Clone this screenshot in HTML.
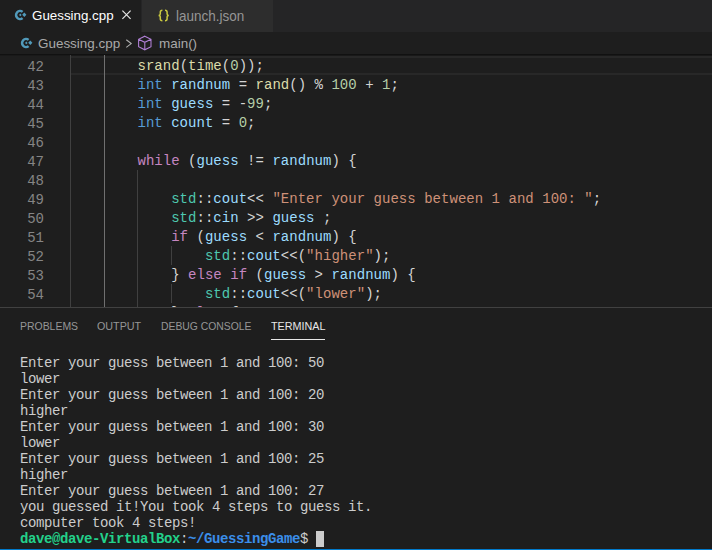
<!DOCTYPE html>
<html><head><meta charset="utf-8">
<style>
*{margin:0;padding:0;box-sizing:border-box}
html,body{width:712px;height:550px;overflow:hidden;background:#1e1e1e}
body{position:relative;font-family:"Liberation Sans",sans-serif}
.abs{position:absolute}
#tabs{left:0;top:0;width:712px;height:32px;background:#252526}
#tab1{left:0;top:0;width:142px;height:32px;background:#1e1e1e;border-right:1px solid #252526}
#tab2{left:142px;top:0;width:132px;height:32px;background:#2d2d2d;border-right:1px solid #252526}
.tt{font-size:13px;white-space:nowrap;line-height:16px}
#crumbs{left:0;top:32px;width:712px;height:22px;background:#1e1e1e}
.bc{font-size:13.45px;color:#a9a9a9;white-space:nowrap;line-height:16px}
#shadow{left:0;top:54px;width:712px;height:2px;background:linear-gradient(#111111 50%,#191919 50%)}
#hl{left:71px;top:56px;width:641px;height:19px;border-top:2px solid #282828;border-bottom:2px solid #282828}
.ln{margin-top:2px;left:0;width:44px;text-align:right;font-family:"Liberation Mono",monospace;font-size:14px;letter-spacing:0.03px;color:#858585;height:19px;line-height:19px}
.code{margin-top:1px;left:70px;font-family:"Liberation Mono",monospace;font-size:14px;letter-spacing:0.03px;color:#d4d4d4;white-space:pre;height:19px;line-height:19px}
.g{width:1px;background:#404040}
.kw{color:#569cd6}.fn{color:#dcdcaa}.v{color:#9cdcfe}.n{color:#b5cea8}.c{color:#c586c0}.ns{color:#4ec9b0}.s{color:#ce9178}
#panelb{left:0;top:307px;width:712px;height:1px;background:#414141}
.pt{transform-origin:0 0;font-size:11px;color:#969696;white-space:nowrap;line-height:14px;top:319px}
#term{left:20px;top:355px;font-family:"Liberation Mono",monospace;font-size:14px;color:#cccccc;white-space:pre;line-height:16px;letter-spacing:-0.4px}
.gr{color:#23d18b;font-weight:bold}.bl{color:#3b8eea;font-weight:bold}
#cursor{left:316px;top:531px;width:8px;height:16px;background:#cccccc}
#status{left:0;top:549px;width:712px;height:1px;background:#007acc}
</style></head><body>
<div id="tabs" class="abs"></div>
<div id="tab1" class="abs"></div>
<div id="tab2" class="abs"></div>
<!-- tab 1 icon -->
<svg class="abs" style="left:14px;top:9px" width="15" height="12" viewBox="0 0 15 12">
<path d="M8.6 2.9A4 4 0 1 0 8.6 9.1" fill="none" stroke="#519aba" stroke-width="2.5"/>
<path d="M5 5.9L6.3 4.6L7.6 5.9L6.3 7.2Z" fill="#519aba"/>
<path d="M8.2 5.8L10.3 3.6L12.4 5.8L10.3 8Z" fill="#519aba"/>
</svg>
<div class="abs tt" style="left:32px;top:8px;color:#ffffff;font-size:13.35px">Guessing.cpp</div>
<svg class="abs" style="left:120px;top:8px" width="14" height="14" viewBox="0 0 14 14"><path d="M2.4 2.7L10.6 10.9M10.6 2.7L2.4 10.9" stroke="#e8e8e8" stroke-width="1.15"/></svg>
<!-- tab 2 -->
<svg class="abs" style="left:150px;top:0px" width="25" height="32" viewBox="150 0 25 32"><path d="M162.4 10.2Q160.3 10.2 160.3 12.2V14.1Q160.3 15.4 158.6 15.4Q160.3 15.4 160.3 16.7V18.8Q160.3 20.8 162.4 20.8M165 10.2Q167.1 10.2 167.1 12.2V14.1Q167.1 15.4 168.8 15.4Q167.1 15.4 167.1 16.7V18.8Q167.1 20.8 165 20.8" fill="none" stroke="#cbcb41" stroke-width="1.5"/></svg>
<div class="abs tt" style="left:176px;top:7.5px;color:#969696;font-size:13.5px;transform:scaleY(1.06);transform-origin:0 0">launch.json</div>
<div id="crumbs" class="abs"></div>
<svg class="abs" style="left:20px;top:37px" width="15" height="12" viewBox="0 0 15 12">
<path d="M8.6 2.9A4 4 0 1 0 8.6 9.1" fill="none" stroke="#519aba" stroke-width="2.5"/>
<path d="M5 5.9L6.3 4.6L7.6 5.9L6.3 7.2Z" fill="#519aba"/>
<path d="M8.2 5.8L10.3 3.6L12.4 5.8L10.3 8Z" fill="#519aba"/>
</svg>
<div class="abs bc" style="left:38px;top:36px">Guessing.cpp</div>
<svg class="abs" style="left:124px;top:38px" width="10" height="12" viewBox="0 0 10 12"><path d="M2.3 1.8L7.2 5.6L2.3 9.4" fill="none" stroke="#b0b0b0" stroke-width="1.1"/></svg>
<svg class="abs" style="left:134px;top:32px" width="22" height="22" viewBox="134 32 22 22"><path d="M144.8 36.2L151 39.3V46.7L144.8 49.8L138.6 46.7V39.3Z M138.6 39.3L144.8 42.3L151 39.3 M144.8 42.3V49.8" fill="none" stroke="#b180d7" stroke-width="1.05" stroke-linejoin="miter"/></svg>
<div class="abs bc" style="left:159px;top:36px">main()</div>
<div id="shadow" class="abs"></div>
<div id="hl" class="abs"></div>
<!-- guides -->
<div class="abs g" style="left:70px;top:55px;height:252px"></div>
<div class="abs g" style="left:104px;top:55px;height:252px;background:#707070"></div>
<div class="abs g" style="left:137px;top:170px;height:137px"></div>
<div class="abs g" style="left:171px;top:246px;height:19px"></div>
<div class="abs g" style="left:171px;top:284px;height:19px"></div>
<div id="code">
<div class="abs ln" style="top:56px">42</div><div class="abs code" style="top:56px">        <span class="fn">srand</span>(<span class="fn">time</span>(<span class="n">0</span>));</div>
<div class="abs ln" style="top:75px">43</div><div class="abs code" style="top:75px">        <span class="kw">int</span> <span class="v">randnum</span> = <span class="fn">rand</span>() % <span class="n">100</span> + <span class="n">1</span>;</div>
<div class="abs ln" style="top:94px">44</div><div class="abs code" style="top:94px">        <span class="kw">int</span> <span class="v">guess</span> = -<span class="n">99</span>;</div>
<div class="abs ln" style="top:113px">45</div><div class="abs code" style="top:113px">        <span class="kw">int</span> <span class="v">count</span> = <span class="n">0</span>;</div>
<div class="abs ln" style="top:132px">46</div>
<div class="abs ln" style="top:151px">47</div><div class="abs code" style="top:151px">        <span class="c">while</span> (<span class="v">guess</span> != <span class="v">randnum</span>) {</div>
<div class="abs ln" style="top:170px">48</div>
<div class="abs ln" style="top:189px">49</div><div class="abs code" style="top:189px">            <span class="ns">std</span>::<span class="v">cout</span>&lt;&lt; <span class="s">"Enter your guess between 1 and 100: "</span>;</div>
<div class="abs ln" style="top:208px">50</div><div class="abs code" style="top:208px">            <span class="ns">std</span>::<span class="v">cin</span> &gt;&gt; <span class="v">guess</span> ;</div>
<div class="abs ln" style="top:227px">51</div><div class="abs code" style="top:227px">            <span class="c">if</span> (<span class="v">guess</span> &lt; <span class="v">randnum</span>) {</div>
<div class="abs ln" style="top:246px">52</div><div class="abs code" style="top:246px">                <span class="ns">std</span>::<span class="v">cout</span>&lt;&lt;(<span class="s">"higher"</span>);</div>
<div class="abs ln" style="top:265px">53</div><div class="abs code" style="top:265px">            } <span class="c">else</span> <span class="c">if</span> (<span class="v">guess</span> &gt; <span class="v">randnum</span>) {</div>
<div class="abs ln" style="top:284px">54</div><div class="abs code" style="top:284px">                <span class="ns">std</span>::<span class="v">cout</span>&lt;&lt;(<span class="s">"lower"</span>);</div>
<div class="abs ln" style="top:303px">55</div><div class="abs code" style="top:303px">            } <span class="c">else</span> {</div>
</div>
<!-- panel -->
<div class="abs" style="left:0;top:307px;width:712px;height:243px;background:#1e1e1e"></div>
<div id="panelb" class="abs"></div>
<div class="abs pt" style="left:20px;transform:scaleX(0.95)">PROBLEMS</div>
<div class="abs pt" style="left:97px;transform:scaleX(0.977)">OUTPUT</div>
<div class="abs pt" style="left:161px;transform:scaleX(0.943)">DEBUG CONSOLE</div>
<div class="abs pt" style="left:271px;color:#e7e7e7;transform:scaleX(0.98)">TERMINAL</div>
<div class="abs" style="left:271px;top:339px;width:54px;height:1px;background:#e7e7e7"></div>
<div id="term" class="abs">Enter your guess between 1 and 100: 50
lower
Enter your guess between 1 and 100: 20
higher
Enter your guess between 1 and 100: 30
lower
Enter your guess between 1 and 100: 25
higher
Enter your guess between 1 and 100: 27
you guessed it!You took 4 steps to guess it.
computer took 4 steps!
<span class="gr">dave@dave-VirtualBox</span>:<span class="bl">~/GuessingGame</span>$ </div>
<div id="cursor" class="abs"></div>
<div id="status" class="abs"></div>
</body></html>
